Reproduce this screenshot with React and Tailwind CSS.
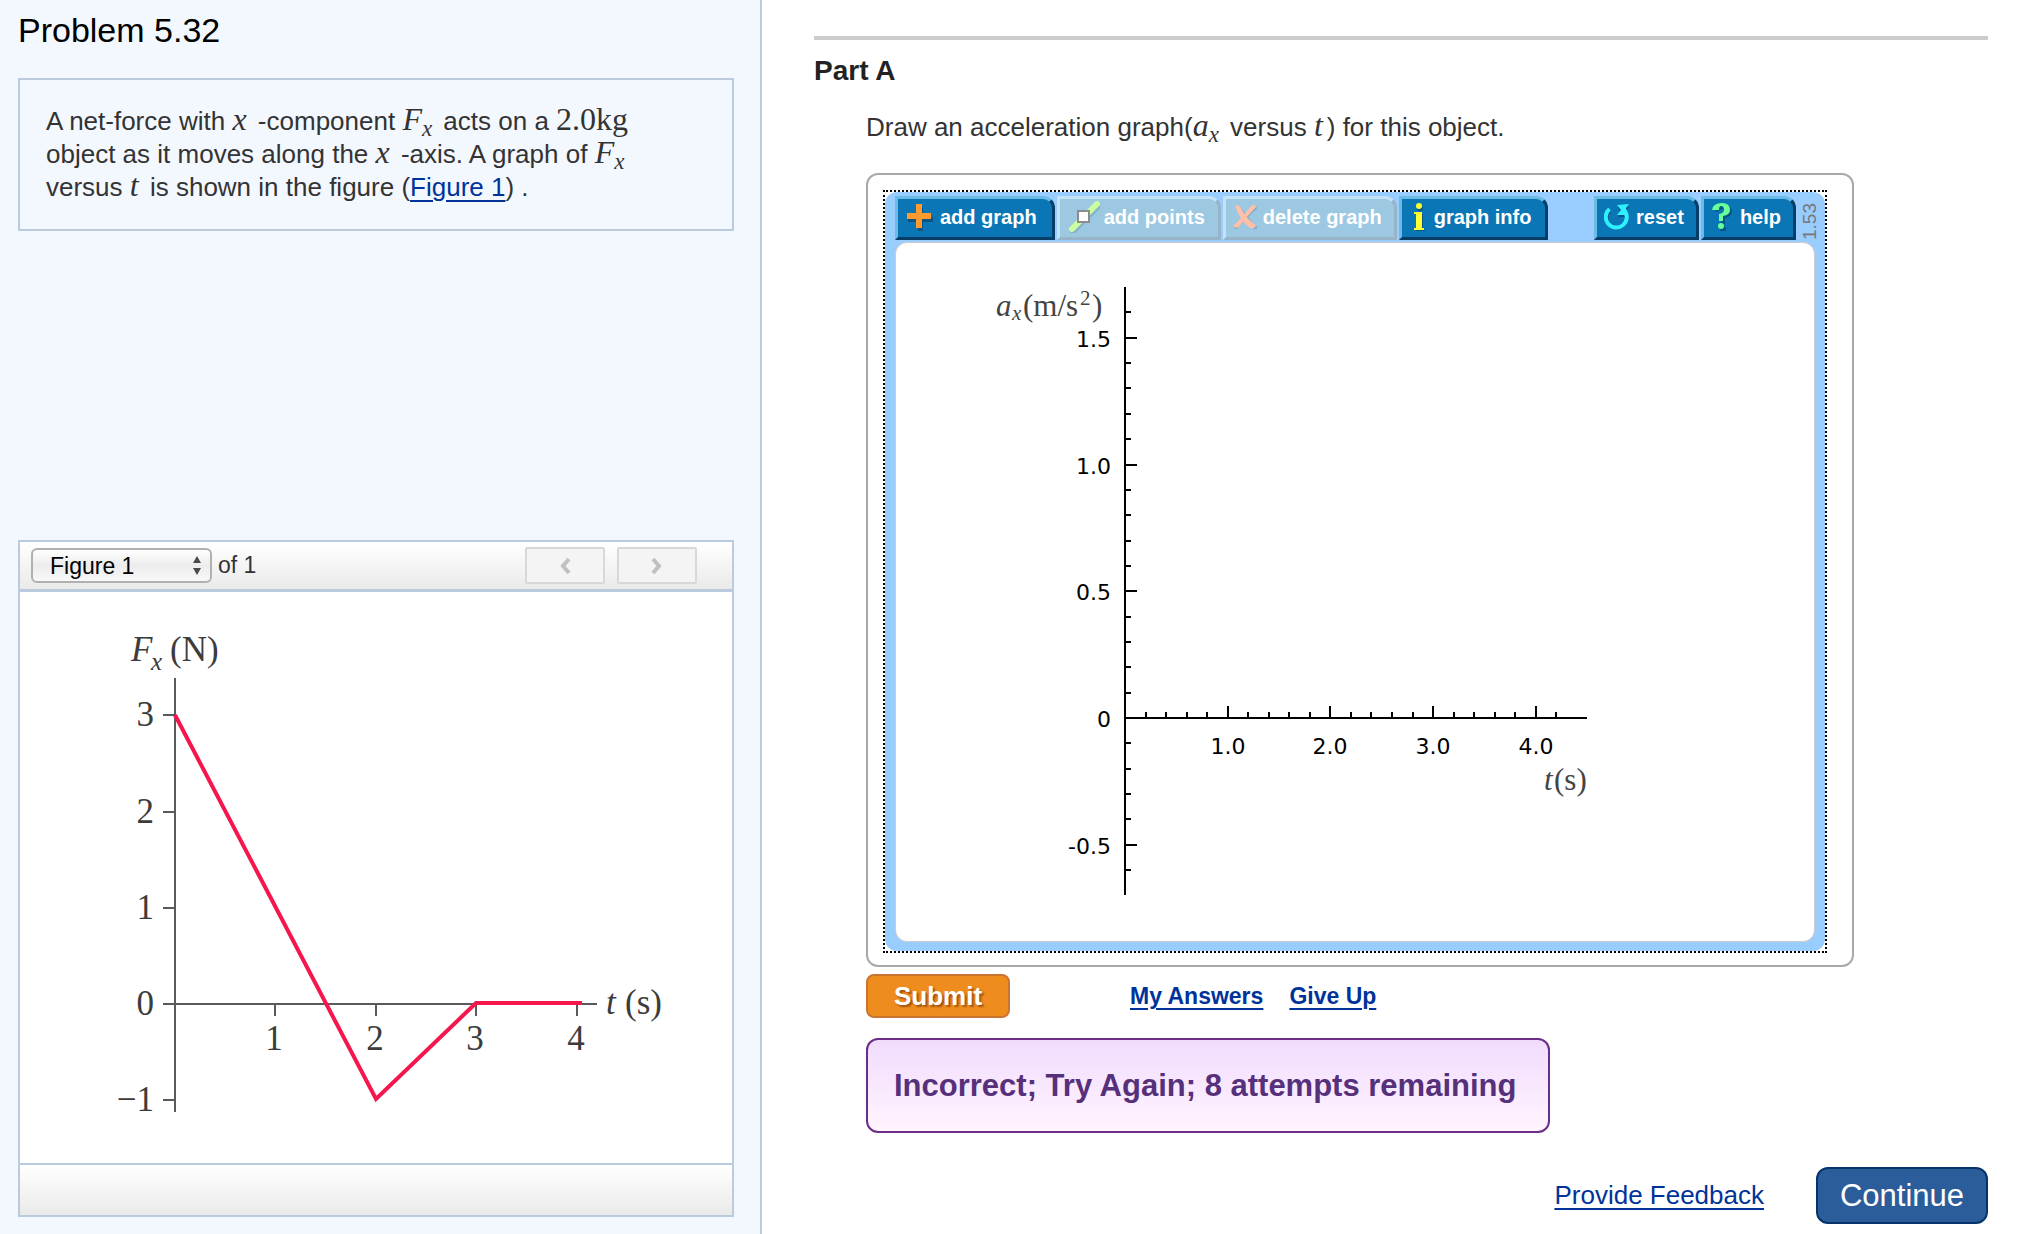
import { useState } from 'react';

const sans = 'font-["Liberation_Sans",Arial,sans-serif]';

// Inline math: italic serif letter with an optional subscript
function Var({ children, sub }) {
  return (
    <span className='mr-1 font-["Liberation_Serif",serif] text-[32px] leading-0 italic'>
      {children}
      {sub && <sub className="text-[23px]">{sub}</sub>}
    </span>
  );
}

function PlusIcon() {
  return (
    <svg className="h-7 w-7 shrink-0" viewBox="0 0 28 28">
      <path d="M12 4h5v10h10v5H17v9h-5v-9H2v-5h10z" fill="#063f66" opacity="0.6" />
      <path d="M10 1h6v9h9v6h-9v9h-6v-9H1v-6h9z" fill="#ff9a2e" />
    </svg>
  );
}

function PointsIcon() {
  return (
    <svg className="h-8 w-8 shrink-0" viewBox="0 0 32 32">
      <path d="M5 31L31 5" stroke="#7fa9c2" strokeWidth="5" strokeLinecap="round" opacity="0.7" />
      <path d="M4 28L29 3" stroke="#cdffa0" strokeWidth="6" strokeLinecap="round" />
      <rect x="10" y="10" width="11" height="11" fill="#fff" stroke="#8c8c8c" strokeWidth="2" />
    </svg>
  );
}

function CrossIcon() {
  return (
    <svg className="h-6 w-6 shrink-0" viewBox="0 0 24 24">
      <g stroke="#86aec6" fill="none" strokeWidth="4" strokeLinecap="round" transform="translate(1 1)">
        <path d="M4 2C9 6 15 17 22 22M21 2C14 8 8 15 2 21" />
      </g>
      <path d="M2 1Q6 -1 8 3Q13 14 23 20Q22 24 17 23Q8 17 2 1z" fill="#ffbfa8" />
      <path d="M22 0L23 2Q13 12 6 22Q2 24 0 21Q9 13 18 1z" fill="#ffbfa8" />
    </svg>
  );
}

function InfoIcon() {
  return (
    <svg className="h-7 w-3 shrink-0" viewBox="0 0 12 28">
      <g fill="#063f66" opacity="0.6" transform="translate(1 2)">
        <circle cx="5" cy="3" r="3" />
        <path d="M1 9h7v16h2v2H1v-2h2V11H1z" />
      </g>
      <g fill="#ffff33">
        <circle cx="5" cy="3" r="3" />
        <path d="M0 9h8v16h2v2H0v-2h2V11H0z" />
      </g>
    </svg>
  );
}

function ResetIcon() {
  return (
    <svg className="h-[26px] w-[26px] shrink-0" viewBox="0 0 26 26">
      <g transform="translate(1 2)" opacity="0.6">
        <path d="M5 5a10 10 0 1 0 15 1" fill="none" stroke="#063f66" strokeWidth="3" />
        <path d="M13 1h12l-4 3v7h-8l3-4z" fill="#063f66" />
      </g>
      <path d="M5.500 5A10.500 10.500 0 1 0 20.500 6.500" fill="none" stroke="#2ef0ff" strokeWidth="4" />
      <path d="M13 1L25 0L22 4L23 11L13 11L17 6z" fill="#2ef0ff" />
    </svg>
  );
}

function HelpIcon() {
  return (
    <svg className="h-7 w-[22px] shrink-0" viewBox="0 0 22 28">
      <g transform="translate(2 2)" opacity="0.6">
        <path d="M2 6Q4 2 10 2Q16 2 16 7Q16 10 9 12V19" fill="none" stroke="#063f66" strokeWidth="4" />
        <circle cx="9" cy="24" r="3" fill="#063f66" />
      </g>
      <path d="M0 7Q1 0 10 0Q18 0 18 7Q18 12 11 13V18H7V11Q12 10 12 7Q12 3 9 3Q7 3 7 7z" fill="#66ff99" />
      <circle cx="9" cy="23" r="3" fill="#66ff99" />
    </svg>
  );
}

function ToolButton({ icon, disabled, className, children }) {
  return (
    <button
      type="button"
      disabled={disabled}
      className={`flex h-11 items-center rounded-tr-xl border-3 pb-0.5 text-[20px] font-bold whitespace-nowrap text-white ${
        disabled
          ? 'border-t-[#c3e2f5] border-r-[#98b4c8] border-b-[#98b4c8] border-l-[#c3e2f5] bg-[#9cc8e1]'
          : 'border-t-[#6cbae6] border-r-[#063e68] border-b-[#063e68] border-l-[#6cbae6] bg-[#0a76b6]'
      } ${className}`}
    >
      {icon}
      {children}
    </button>
  );
}

function NavButton({ label, d }) {
  return (
    <button
      type="button"
      aria-label={label}
      className="flex h-[37px] w-20 items-center justify-center rounded-xs border-2 border-[#d8d8d8] bg-[#f4f4f4]"
    >
      <svg className="h-[18px] w-3" viewBox="0 0 12 18">
        <path d={d} fill="none" stroke="#c0c0c0" strokeWidth="4" />
      </svg>
    </button>
  );
}

// Force versus time
function ForceGraph() {
  const yTicks = [
    ['3', 123],
    ['2', 220],
    ['1', 316],
    ['0', 412],
    ['−1', 508],
  ];
  const xTicks = [
    ['1', 255],
    ['2', 356],
    ['3', 456],
    ['4', 557],
  ];

  return (
    <svg
      className='block h-auto w-full font-["Liberation_Serif",serif]'
      viewBox="0 0 712 571"
      role="img"
      aria-label="Force graph"
    >
      <g stroke="#5a5a5a" strokeWidth="2">
        <path d="M155 86V520M143 412H577" />
        {yTicks.map(([label, y]) => (
          <path key={label} d={`M143 ${y}H155`} />
        ))}
        {xTicks.map(([label, x]) => (
          <path key={label} d={`M${x} 412V424`} />
        ))}
      </g>
      <path d="M155 123L356 507L456 411H562" fill="none" stroke="#f6164e" strokeWidth="4" />
      <g fill="#3c3c3c" fontSize="35">
        <text x="111" y="69" fontStyle="italic">F</text>
        <text x="131" y="78" fontSize="25" fontStyle="italic">x</text>
        <text x="150" y="69">(N)</text>
        {yTicks.map(([label, y]) => (
          <text key={label} x="134" y={y + 11} textAnchor="end">{label}</text>
        ))}
        {xTicks.map(([label, x]) => (
          <text key={label} x={x - 1} y="458" textAnchor="middle">{label}</text>
        ))}
        <text x="586" y="422" fontStyle="italic">t</text>
        <text x="605" y="422">(s)</text>
      </g>
    </svg>
  );
}

// Empty acceleration axes that the answer is drawn on
function AccelerationGraph() {
  const yOf = (v) => Math.round(475 - v * 253.5);
  const xOf = (v) => Math.round(229 + v * 102.7);
  const yMinor = Array.from({ length: 23 }, (_, i) => (i - 6) / 10);
  const xMinor = Array.from({ length: 21 }, (_, i) => (i + 1) / 5);

  return (
    <svg
      className='block h-auto w-full font-["DejaVu_Sans",Verdana,sans-serif]'
      viewBox="0 0 918 698"
      role="img"
      aria-label="Acceleration graph"
    >
      <g stroke="#000" strokeWidth="2" shapeRendering="crispEdges">
        <path d="M229 44V652M229 475H691" />
        {yMinor.map((v) => (
          <path key={v} d={`M229 ${yOf(v)}H${Math.round(v * 10) % 5 ? 235 : 241}`} />
        ))}
        {xMinor.map((v) => (
          <path key={v} d={`M${xOf(v)} 475V${Math.round(v * 5) % 5 ? 469 : 463}`} />
        ))}
      </g>
      <g fontSize="22">
        {['1.5', '1.0', '0.5', '0', '-0.5'].map((label) => (
          <text key={label} x="215" y={yOf(Number(label)) + 9} textAnchor="end">{label}</text>
        ))}
        {['1.0', '2.0', '3.0', '4.0'].map((label) => (
          <text key={label} x={xOf(Number(label))} y="511" textAnchor="middle">{label}</text>
        ))}
      </g>
      <g className='font-["Liberation_Serif",serif]' fill="#444" fontSize="31">
        <text x="100" y="73" fontStyle="italic">a</text>
        <text x="116" y="77" fontSize="21" fontStyle="italic">x</text>
        <text x="127" y="73">(m/s</text>
        <text x="184" y="62" fontSize="21">2</text>
        <text x="196" y="73">)</text>
        <text x="648" y="547" fontStyle="italic">t</text>
        <text x="658" y="547">(s)</text>
      </g>
    </svg>
  );
}

export default function App() {
  const [figure, setFigure] = useState('Figure 1');

  return (
    <div className={`grid min-h-screen grid-cols-[762fr_1276fr] bg-white text-[26px] text-[#333] ${sans}`}>
      <aside className="flex flex-col border-r-2 border-[#bacbdc] bg-[#f3f8ff] pt-2 pr-[26px] pb-[17px] pl-[18px]">
        <h1 className="text-[34px] leading-[44px] text-black">Problem 5.32</h1>

        <div className="mt-[26px] border-2 border-[#b9cbdd] px-[26px] py-[25px] leading-[33px]">
          A net-force with <Var>x</Var> -component <Var sub="x">F</Var> acts on a{' '}
          <span className='font-["Liberation_Serif",serif] text-[32px] leading-0'>2.0kg</span>
          <br />
          object as it moves along the <Var>x</Var> -axis. A graph of <Var sub="x">F</Var>
          <br />
          versus <Var>t</Var> is shown in the figure (
          <a href="#figure" className="text-[#003399] underline decoration-2 underline-offset-4">Figure 1</a>) .
        </div>

        <section id="figure" className="mt-auto border-2 border-[#b9cbdd] bg-white text-[23px]">
          <div className="flex items-center border-b-3 border-[#b9cbdd] bg-linear-to-b from-white to-[#eaeaea] py-[5px] pr-[35px] pl-[11px]">
            <div className="relative">
              <select
                aria-label="Figure"
                value={figure}
                onChange={(e) => setFigure(e.target.value)}
                className="block h-[35px] w-[181px] appearance-none rounded-md border-2 border-[#b0b0b0] bg-linear-to-b from-white via-[#ececec] to-[#f8f8f8] pl-[17px] leading-7 text-black"
              >
                <option>Figure 1</option>
              </select>
              <svg className="pointer-events-none absolute top-2 right-2.5 h-5 w-[10px]" viewBox="0 0 10 20">
                <path d="M5 0l4 7H1zM5 19l4-7H1z" fill="#4a4a4a" />
              </svg>
            </div>
            <span className="ml-1.5">of 1</span>
            <div className="ml-auto flex gap-3">
              <NavButton label="Previous figure" d="M10 2L4 9L10 16" />
              <NavButton label="Next figure" d="M2 2L8 9L2 16" />
            </div>
          </div>
          <ForceGraph />
          <div className="h-[52px] border-t-2 border-[#b9cbdd] bg-linear-to-b from-white to-[#eaeaea]" />
        </section>
      </aside>

      <main className="flex flex-col pt-9 pr-[50px] pb-[10px] pl-[52px]">
        <hr className="border-t-4 border-[#ccc]" />
        <h2 className="mt-[14px] text-[28px] leading-[34px] font-bold text-[#222]">Part A</h2>

        <div className="ml-[52px]">
          <p className="mt-[23px] leading-8">
            Draw an acceleration graph(<Var sub="x">a</Var> versus <Var>t</Var>) for this object.
          </p>

          <div className="mt-[30px] w-full max-w-[988px] rounded-xl border-2 border-[#a9a9a9] pt-[15px] pr-[25px] pb-3 pl-[15px]">
            <div className="border-2 border-dotted border-black">
              <div className="rounded-xl bg-[#99ccff] px-[10px] pt-1 pb-[9px]">
                <div className="-mr-[5px] flex gap-0.5">
                  <ToolButton icon={<PlusIcon />} className="gap-1.5 pr-[15px] pl-2">add graph</ToolButton>
                  <ToolButton icon={<PointsIcon />} className="gap-1 pr-[13px] pl-2" disabled>add points</ToolButton>
                  <ToolButton icon={<CrossIcon />} className="gap-1.5 pr-[12px] pl-[7px]" disabled>delete graph</ToolButton>
                  <ToolButton icon={<InfoIcon />} className="gap-2 pr-[14px] pl-3">graph info</ToolButton>
                  <div className="ml-auto flex gap-0.5">
                    <ToolButton icon={<ResetIcon />} className="gap-1.5 pr-3 pl-[7px]">reset</ToolButton>
                    <ToolButton icon={<HelpIcon />} className="gap-1.5 pr-3 pl-2">help</ToolButton>
                    <span className="ml-0.5 rotate-180 text-[19px] leading-5 text-[#777] [writing-mode:vertical-rl]">1.53</span>
                  </div>
                </div>
                <div className="mt-0.5 overflow-hidden rounded-xl border border-[#ccc] bg-white">
                  <AccelerationGraph />
                </div>
              </div>
            </div>
          </div>

          <div className="mt-[7px] flex items-center text-[23px] font-bold">
            <button
              type="button"
              className="h-11 w-36 rounded-lg border-2 border-[#c9742f] bg-[#ef8c1e] text-[26px] leading-none text-white [text-shadow:2px_2px_2px_#a05010]"
            >
              Submit
            </button>
            <a href="#answers" className="ml-[120px] text-[#003399] underline decoration-2 underline-offset-4">My Answers</a>
            <a href="#give-up" className="ml-[26px] text-[#003399] underline decoration-2 underline-offset-4">Give Up</a>
          </div>

          <div className="mt-5 w-fit rounded-xl border-2 border-[#6b2d87] bg-linear-to-b from-[#f1dcfd] to-[#fff4ff] py-[26px] pr-[32px] pl-[26px] text-[31px] leading-[39px] font-bold text-[#56307a]">
            Incorrect; Try Again; 8 attempts remaining
          </div>
        </div>

        <div className="mt-auto flex items-center justify-end gap-[52px]">
          <a href="#feedback" className="text-[#003399] underline decoration-2 underline-offset-4">Provide Feedback</a>
          <button
            type="button"
            className="h-[57px] w-[172px] rounded-xl border-2 border-[#06346a] bg-[#2c5d9b] text-[31px] leading-none text-white"
          >
            Continue
          </button>
        </div>
      </main>
    </div>
  );
}
